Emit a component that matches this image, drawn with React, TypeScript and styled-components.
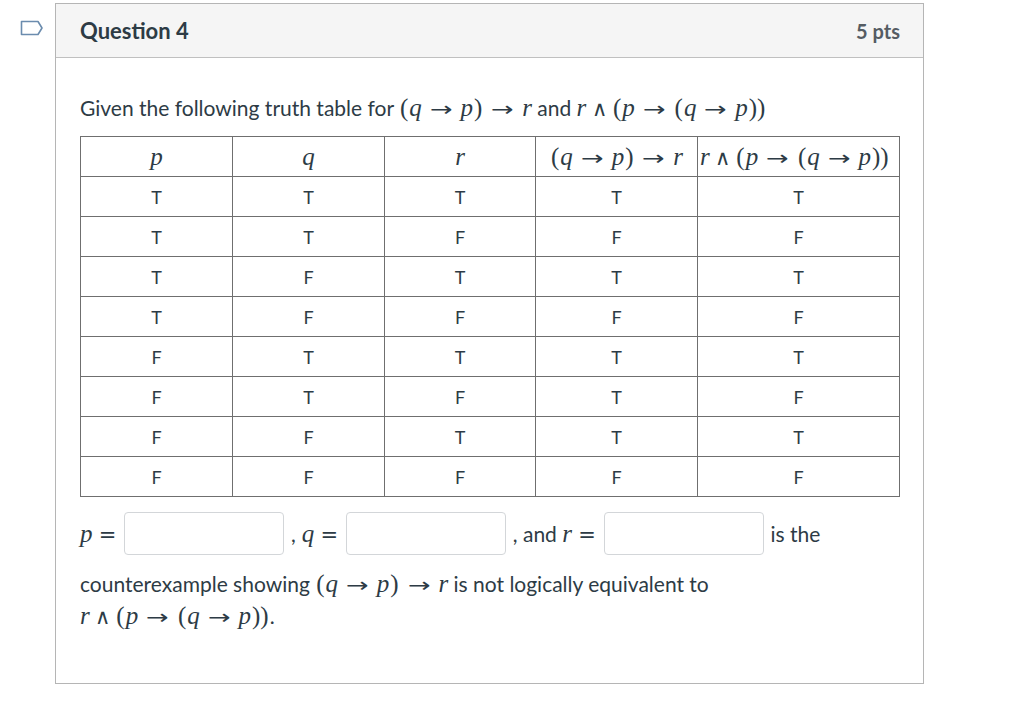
import styled, { createGlobalStyle } from "styled-components";

const GlobalStyle = createGlobalStyle`
  body {
    margin: 0;
    background: #ffffff;
    font-family: Lato, "Liberation Sans", sans-serif;
    color: #2d3b45;
  }
`;

const Page = styled.div`
  display: flex;
  align-items: flex-start;
  padding-top: 3px;
`;

const FlagColumn = styled.div`
  width: 55px;
  display: flex;
  justify-content: center;
  padding-top: 17px;
  padding-left: 8px;
  box-sizing: border-box;
`;

const Card = styled.div`
  width: 869px;
  height: 681px;
  box-sizing: border-box;
  border: 1px solid #b5b5b5;
`;

const CardHeader = styled.div`
  height: 54px;
  box-sizing: border-box;
  background: #f5f5f5;
  border-bottom: 1px solid #c0c0c0;
  display: flex;
  align-items: center;
  justify-content: space-between;
  padding: 0 23px 0 24px;
`;

const Title = styled.h2`
  margin: 0;
  font-size: 22px;
  font-weight: 700;
  color: #2d3b45;
`;

const Points = styled.span`
  font-size: 20px;
  font-weight: 700;
  color: #555c63;
`;

const CardBody = styled.div`
  padding: 36px 24px 0 24px;
`;

const Prompt = styled.p`
  margin: 0 0 14px 0;
  font-size: 21px;
  line-height: 28px;
`;

const M = styled.span`
  font-family: "Liberation Serif", "DejaVu Serif", serif;
  font-style: italic;
  font-size: 25px;
  font-weight: 400;
  line-height: 1;
  white-space: nowrap;
`;

const ArrowGlyph = styled.span`
  display: inline-block;
  font-style: normal;
  font-family: "DejaVu Sans", sans-serif;
  font-size: 20px;
  font-weight: 400;
  margin: 0 11px;
  transform: scaleX(1.35);
`;

const Equals = styled.span`
  font-style: normal;
  font-family: "DejaVu Sans", sans-serif;
  font-size: 21px;
  margin: 0 0.22em 0 0.3em;
`;

const Wedge = styled.span`
  font-style: normal;
  margin: 0 0.25em;
  font-family: "DejaVu Sans", sans-serif;
  font-size: 0.85em;
  font-weight: 200;
`;

const Paren = styled.span`
  font-style: normal;
  margin: 0 1px;
`;

const Table = styled.table`
  border-collapse: collapse;
  table-layout: fixed;
  width: 819px;
`;

const Cell = styled.td`
  border: 1px solid #6f6f6f;
  height: 39px;
  padding: 0;
  text-align: center;
  font-size: 18px;
  font-weight: 400;
  color: #2d3b45;
  white-space: nowrap;
  overflow: visible;
`;

const HeadCell = styled(Cell)<{ $left?: boolean }>`
  text-align: ${(p) => (p.$left ? "left" : "center")};
  padding-left: ${(p) => (p.$left ? "2px" : "0")};
`;

const AnswerRow = styled.div`
  display: flex;
  align-items: center;
  margin-top: 15px;
  font-size: 21px;
  height: 43px;
`;

const Joiner = styled.span<{ $gap: number }>`
  margin-right: ${(p) => p.$gap}px;
  white-space: pre;
`;

const Blank = styled.input`
  width: 160px;
  height: 43px;
  box-sizing: border-box;
  border: 1px solid #d3d6d9;
  border-radius: 4px;
  margin: 0 7px 0 3px;
  background: #ffffff;
`;

const Closing = styled.p`
  margin: 13px 0 0 0;
  font-size: 21px;
  line-height: 32px;
`;

const rows = [
  ["T", "T", "T", "T", "T"],
  ["T", "T", "F", "F", "F"],
  ["T", "F", "T", "T", "T"],
  ["T", "F", "F", "F", "F"],
  ["F", "T", "T", "T", "T"],
  ["F", "T", "F", "T", "F"],
  ["F", "F", "T", "T", "T"],
  ["F", "F", "F", "F", "F"],
];

const Arrow = () => <ArrowGlyph>→</ArrowGlyph>;

function ExprA() {
  return (
    <M>
      <Paren>(</Paren>q<Arrow />p<Paren>)</Paren>
      <Arrow />r
    </M>
  );
}

function ExprB() {
  return (
    <M>
      r<Wedge>∧</Wedge>
      <Paren>(</Paren>p<Arrow />
      <Paren>(</Paren>q<Arrow />p<Paren>))</Paren>
    </M>
  );
}

function FlagIcon() {
  return (
    <svg width="24" height="16" viewBox="0 0 24 16">
      <path
        d="M1.5 1.5 H18 L22 8 L18 14.5 H1.5 Z"
        fill="none"
        stroke="#6b8cae"
        strokeWidth="1.6"
        strokeLinejoin="round"
      />
    </svg>
  );
}

export default function App() {
  return (
    <>
      <GlobalStyle />
      <Page>
        <FlagColumn>
          <FlagIcon />
        </FlagColumn>
        <Card>
          <CardHeader>
            <Title>Question 4</Title>
            <Points>5 pts</Points>
          </CardHeader>
          <CardBody>
            <Prompt>
              Given the following truth table for <ExprA /> and <ExprB />
            </Prompt>
            <Table>
              <colgroup>
                <col style={{ width: 152 }} />
                <col style={{ width: 152 }} />
                <col style={{ width: 151 }} />
                <col style={{ width: 162 }} />
                <col style={{ width: 202 }} />
              </colgroup>
              <thead>
                <tr>
                  <HeadCell as="th">
                    <M>p</M>
                  </HeadCell>
                  <HeadCell as="th">
                    <M>q</M>
                  </HeadCell>
                  <HeadCell as="th">
                    <M>r</M>
                  </HeadCell>
                  <HeadCell as="th">
                    <ExprA />
                  </HeadCell>
                  <HeadCell as="th" $left>
                    <ExprB />
                  </HeadCell>
                </tr>
              </thead>
              <tbody>
                {rows.map((row, i) => (
                  <tr key={i}>
                    {row.map((v, j) => (
                      <Cell key={j}>{v}</Cell>
                    ))}
                  </tr>
                ))}
              </tbody>
            </Table>
            <AnswerRow>
              <M>
                p<Equals>=</Equals>
              </M>
              <Blank aria-label="p" />
              <Joiner $gap={6}>,</Joiner>
              <M>
                q<Equals>=</Equals>
              </M>
              <Blank aria-label="q" />
              <Joiner $gap={0}>, and </Joiner>
              <M>
                r<Equals>=</Equals>
              </M>
              <Blank aria-label="r" />
              is the
            </AnswerRow>
            <Closing>
              counterexample showing <ExprA /> is not logically equivalent to
              <br />
              <ExprB />.
            </Closing>
          </CardBody>
        </Card>
      </Page>
    </>
  );
}
